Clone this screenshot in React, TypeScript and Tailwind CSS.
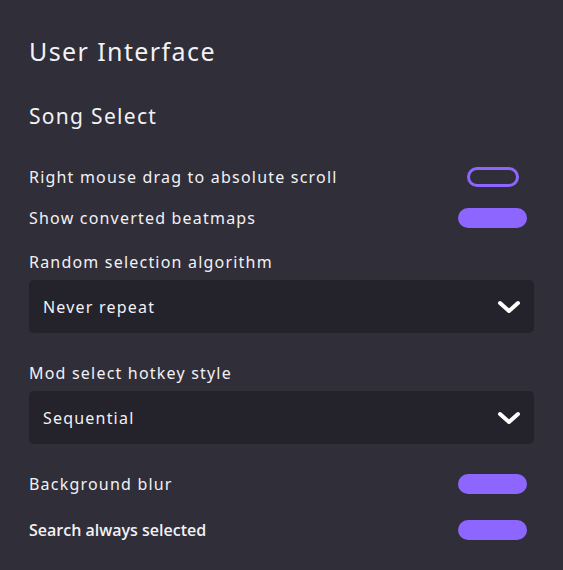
import React from 'react';

function Toggle({ on }: { on: boolean }) {
  if (!on) {
    return (
      <div className="w-[69px] flex justify-center">
        <div className="w-[52px] h-[20px] rounded-full border-[3px] border-[#8c66ff]" />
      </div>
    );
  }
  return <div className="w-[69px] h-[20px] rounded-full bg-[#8c66ff]" />;
}

function ToggleRow({ label, on, alt }: { label: string; on: boolean; alt?: boolean }) {
  return (
    <div className="flex items-center justify-between h-[40px] pr-[7px]">
      <span
        className={
          alt
            ? "text-[16px] font-semibold text-[#f2f1f5] font-['Open_Sans',sans-serif] tracking-[0px]"
            : 'text-[16px] text-[#f2f1f5] tracking-[1.2px]'
        }
      >
        {label}
      </span>
      <Toggle on={on} />
    </div>
  );
}

function Dropdown({ value }: { value: string }) {
  return (
    <div className="flex items-center justify-between h-[53px] rounded-[5px] bg-[#24222a] pl-[14px] pr-[13px]">
      <span className="text-[16px] text-[#f2f1f5] tracking-[1.2px]">{value}</span>
      <svg width="24" height="16" viewBox="0 0 24 16" fill="none">
        <path d="M3 4 L12 12 L21 4" stroke="#ffffff" strokeWidth="4" strokeLinecap="round" strokeLinejoin="round" />
      </svg>
    </div>
  );
}

export default function App() {
  return (
    <div className="w-[563px] h-[570px] bg-[#302e38] font-['Noto_Sans',sans-serif] text-[#f2f1f5] px-[29px] pt-[36px] overflow-hidden">
      <div className="h-[32px] flex items-center text-[25px] tracking-[1.4px]">User Interface</div>
      <div className="h-[28px] mt-[35px] flex items-center text-[21px] tracking-[1.3px]">Song Select</div>

      <div className="mt-[26px] flex flex-col gap-[1px]">
        <ToggleRow label="Right mouse drag to absolute scroll" on={false} />
        <ToggleRow label="Show converted beatmaps" on={true} />
      </div>

      <div className="h-[24px] mt-[12px] flex items-center text-[16px] tracking-[1.2px]">Random selection algorithm</div>
      <div className="mt-[6px]">
        <Dropdown value="Never repeat" />
      </div>

      <div className="h-[24px] mt-[28px] flex items-center text-[16px] tracking-[1.2px]">Mod select hotkey style</div>
      <div className="mt-[6px]">
        <Dropdown value="Sequential" />
      </div>

      <div className="mt-[20px] flex flex-col gap-[6px]">
        <ToggleRow label="Background blur" on={true} />
        <ToggleRow label="Search always selected" on={true} alt />
      </div>
    </div>
  );
}
